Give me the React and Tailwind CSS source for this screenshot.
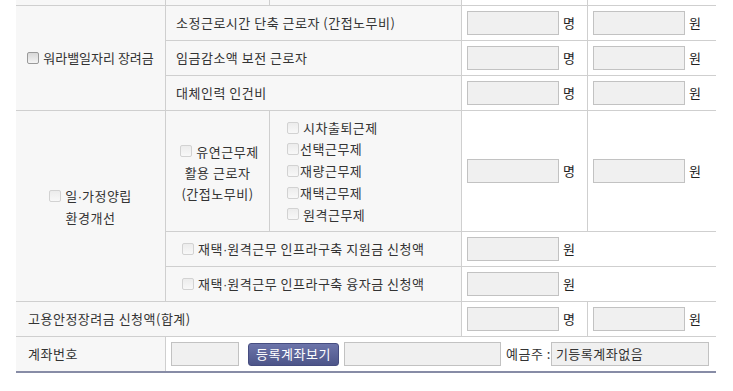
const font = { fontFamily: '"Noto Sans CJK KR", "Noto Sans", sans-serif' };

const Check = ({ disabled }) => (
  <span
    className={
      'inline-block w-[12px] h-[12px] rounded-[2px] border align-middle shrink-0 ' +
      (disabled
        ? 'border-[#d2d2d2] bg-gradient-to-b from-[#ececec] to-[#f8f8f8]'
        : 'border-[#9a9a9a] bg-gradient-to-b from-[#d8d8d8] to-[#f4f4f4]')
    }
  />
);

// narrow middle dot, as in the original page
const Dot = () => <span className="tracking-normal" style={{ fontFamily: '"Liberation Sans", sans-serif' }}>·</span>;

const Field = ({ w = 'w-[92px]', value }) => (
  <span className={`inline-flex items-center shrink-0 h-[24px] ${w} border border-[#c2c2c2] bg-[#f0f0f0] px-[4px] text-[13px] tracking-[0.5px] text-[#333]`}>
    {value}
  </span>
);

const Amount = ({ unit, span = '' }) => (
  <div className={`bg-white flex items-center pl-[5px] gap-[4px] text-[13px] text-[#222] ${span}`}>
    <Field />
    <span>{unit}</span>
  </div>
);

const Label = ({ className = '', children }) => (
  <div className={`bg-[#f7f7f7] flex items-center text-[13px] tracking-[0.5px] text-[#333] whitespace-nowrap ${className}`}>
    {children}
  </div>
);

export default function App() {
  return (
    <div className="w-[733px] h-[391px] bg-white" style={font}>
      <div className="ml-[16px] w-[700px] border-b-2 border-[#878ca6]">
        <div className="grid grid-cols-[149px_103px_191px_125px_128px] grid-rows-[5px_34px_34px_34px_120px_34px_34px_34px_34px] gap-px bg-[#cfcfcf]">
          {/* top partial row */}
          <div className="bg-[#f7f7f7]" />
          <div className="bg-[#f7f7f7]" />
          <div className="bg-[#f7f7f7]" />
          <div className="bg-white" />
          <div className="bg-white" />

          {/* 워라밸일자리 장려금 */}
          <div className="row-span-3 bg-[#f7f7f7] flex items-center justify-center gap-[4px] text-[13px] text-[#333] whitespace-nowrap">
            <Check />
            <span>워라밸일자리 장려금</span>
          </div>
          <Label className="col-span-2 pl-[10px]">소정근로시간 단축 근로자 (간접노무비)</Label>
          <Amount unit="명" />
          <Amount unit="원" />
          <Label className="col-span-2 pl-[10px]">임금감소액 보전 근로자</Label>
          <Amount unit="명" />
          <Amount unit="원" />
          <Label className="col-span-2 pl-[10px]">대체인력 인건비</Label>
          <Amount unit="명" />
          <Amount unit="원" />

          {/* 일·가정양립 환경개선 */}
          <div className="row-span-3 bg-[#f7f7f7] flex flex-col items-center justify-center text-[13px] tracking-[0.5px] text-[#333] leading-[21px]">
            <div className="flex items-center gap-[4px]">
              <Check disabled />
              <span>일<Dot />가정양립</span>
            </div>
            <div>환경개선</div>
          </div>
          <div className="bg-[#f7f7f7] flex flex-col items-center justify-center pt-[2px] text-[13px] tracking-[0.5px] text-[#333] leading-[21px]">
            <div className="flex items-center gap-[4px] pl-[4px]">
              <Check disabled />
              <span>유연근무제</span>
            </div>
            <div>활용 근로자</div>
            <div>(간접노무비)</div>
          </div>
          <div className="bg-[#f7f7f7] flex flex-col justify-center pl-[17px] text-[13px] tracking-[0.5px] text-[#333] leading-[21.7px]">
            <div className="flex items-center gap-[4px]"><Check disabled /><span>시차출퇴근제</span></div>
            <div className="flex items-center gap-[1px]"><Check disabled /><span>선택근무제</span></div>
            <div className="flex items-center gap-[1px]"><Check disabled /><span>재량근무제</span></div>
            <div className="flex items-center gap-[1px]"><Check disabled /><span>재택근무제</span></div>
            <div className="flex items-center gap-[4px]"><Check disabled /><span>원격근무제</span></div>
          </div>
          <Amount unit="명" />
          <Amount unit="원" />

          <Label className="col-span-2 pl-[16px] gap-[4px]">
            <Check disabled />
            <span>재택<Dot />원격근무 인프라구축 지원금 신청액</span>
          </Label>
          <Amount unit="원" span="col-span-2" />
          <Label className="col-span-2 pl-[16px] gap-[4px]">
            <Check disabled />
            <span>재택<Dot />원격근무 인프라구축 융자금 신청액</span>
          </Label>
          <Amount unit="원" span="col-span-2" />

          {/* 합계 */}
          <Label className="col-span-3 pl-[12px]">고용안정장려금 신청액(합계)</Label>
          <Amount unit="명" />
          <Amount unit="원" />

          {/* 계좌번호 */}
          <Label className="pl-[12px]">계좌번호</Label>
          <div className="col-span-4 bg-white flex items-center pl-[5px] text-[13px] tracking-[0.5px] text-[#333] whitespace-nowrap">
            <Field w="w-[68px]" />
            <button
              type="button"
              className="ml-[9px] w-[91px] h-[23px] shrink-0 rounded-[3px] bg-gradient-to-b from-[#6c74aa] to-[#4d5589] text-white text-[13px] tracking-[0.5px] border border-[#464d80]"
            >
              등록계좌보기
            </button>
            <span className="ml-[5px] flex"><Field w="w-[157px]" /></span>
            <span className="ml-[5px]">예금주 :</span>
            <Field w="w-[158px]" value="기등록계좌없음" />
          </div>
        </div>
      </div>
    </div>
  );
}
